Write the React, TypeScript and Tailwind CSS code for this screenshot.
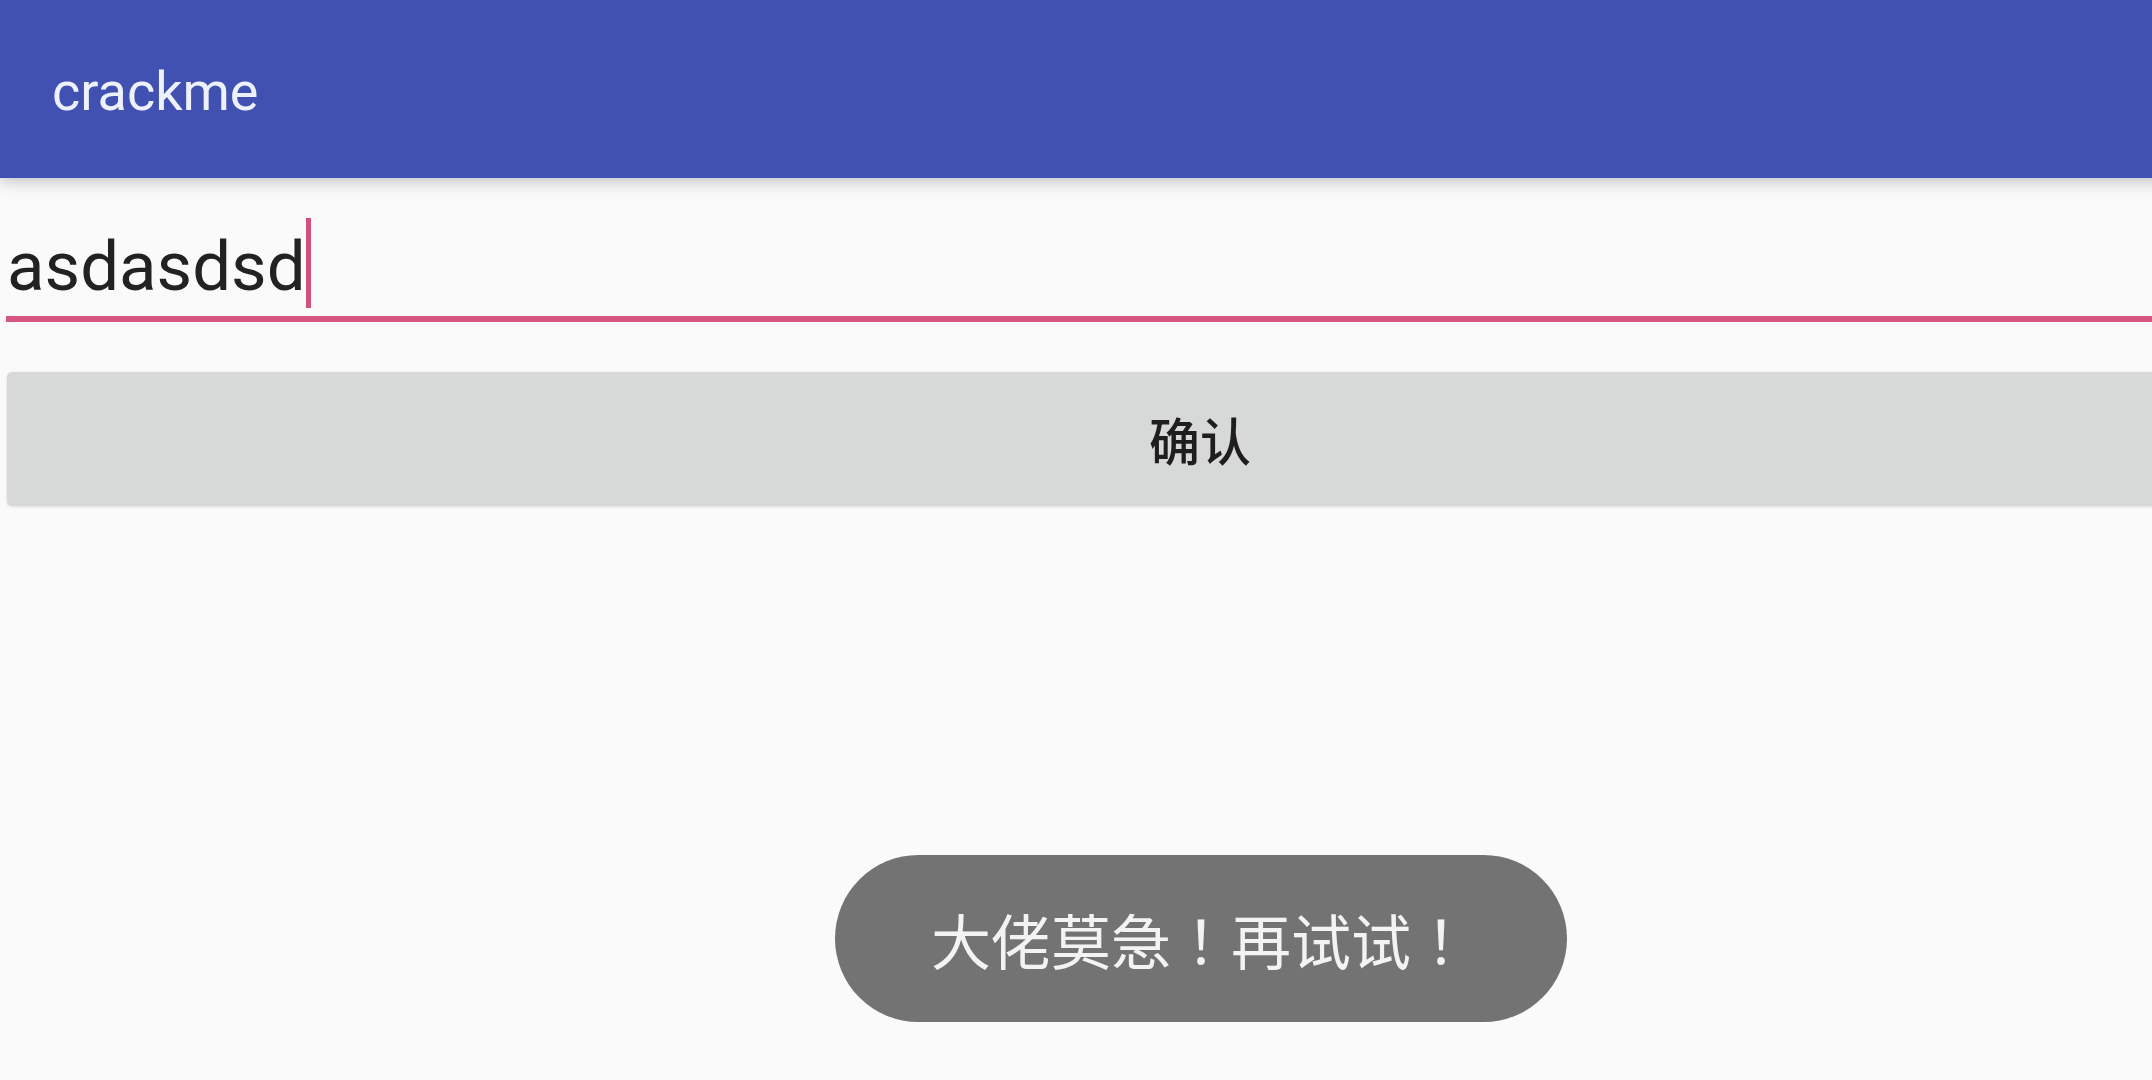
const App = () => {
	return (
		<div className="w-[2152px] h-[1080px] overflow-hidden bg-[#fafafa] font-['Roboto','Noto_Sans_CJK_SC',sans-serif]">
			<div className="relative w-[2400px] h-full flex flex-col">
				<header className="relative z-10 h-[178px] shrink-0 bg-[#4051b1] flex items-center pl-[52px] pt-[6px] shadow-[0_4px_14px_rgba(0,0,0,0.22)]">
					<h1 className="text-[54px] leading-none text-[#eef0fb] font-normal">
						crackme
					</h1>
				</header>

				<div className="mt-[40px] pl-[6px]">
					<div className="flex items-start pl-[1px]">
						<span className="mt-[14px] text-[69px] leading-none text-[#222222]">
							asdasdsd
						</span>
						<span className="w-[5px] h-[90px] bg-[#d4507c]" />
					</div>
					<div className="mt-[8px] h-[6px] bg-[#d6567f]" />
				</div>

				<div className="mt-[50px] pl-[7px] pr-[7px]">
					<button
						type="button"
						className="w-full h-[134px] rounded-[5px] bg-[#d7d8d8] flex items-center justify-center text-[51px] leading-none text-[#1e1e1e] font-medium font-['Noto_Sans_CJK_SC',sans-serif] shadow-[0_1px_3px_rgba(0,0,0,0.12)]"
					>
						确认
					</button>
				</div>

				{/* toast */}
				<div className="absolute left-[835px] top-[855px] w-[732px] h-[167px] rounded-full bg-[#737373] flex items-center justify-center">
					<span className="text-[60px] leading-none text-[#f3f3f3] font-['Noto_Sans_CJK_TC',sans-serif]">
						大佬莫急！再试试！
					</span>
				</div>
			</div>
		</div>
	);
};

export default App;
